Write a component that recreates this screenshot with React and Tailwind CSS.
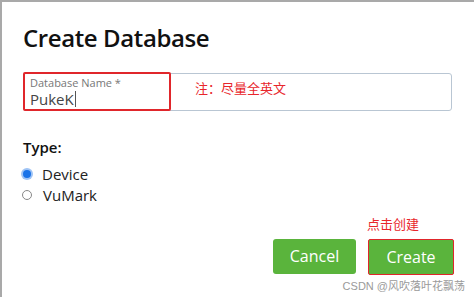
export default function App() {
  return (
    <div className="w-[474px] h-[297px] bg-white border-t-2 border-l-2 border-[#a9a9a9] relative overflow-hidden" style={{ fontFamily: "'Open Sans', 'Noto Sans CJK SC', sans-serif" }}>
      <div className="pl-[21px] pt-[19px] pr-[20px]">
        <h1 className="text-[24px] leading-[34px] font-semibold tracking-[-0.4px] text-[#111]">Create Database</h1>
        <div className="mt-[18px] relative h-[38px] w-[429px] rounded-[3px] border border-[#b9c6d3]">
          <div className="absolute -left-px -top-[2px] w-[148px] h-[39px] border-2 border-[#e0262b] rounded-[2px]" />
          <div className="pl-[6px] pt-[2px]">
            <div className="text-[11px] leading-[14px] text-[#777]">Database Name *</div>
            <div className="text-[15px] leading-[18px] text-[#444] flex items-center">
              PukeK<span className="w-px h-[16px] bg-[#555] ml-px" />
            </div>
          </div>
          <div className="absolute left-[171px] top-[5px] text-[13px] text-[#e8262b]">注：尽量全英文</div>
        </div>
        <div className="mt-[26px] text-[15px] leading-[20px] font-semibold text-[#111]">Type:</div>
        <div className="mt-[7px] flex flex-col gap-[1px] text-[15px] text-[#222]">
          <label className="flex items-center gap-[11px] h-[20px]">
            <span className="w-[8px] h-[8px] rounded-full bg-[#1a73e8] ring-[2px] ring-[#9ec3f5]" />
            Device
          </label>
          <label className="flex items-center gap-[11px] h-[20px]">
            <span className="w-[10px] h-[10px] rounded-full border border-[#888] -ml-px" />
            VuMark
          </label>
        </div>
        <div className="mt-[10px] flex justify-end pr-[1px]">
          <div className="text-[13px] text-[#e8262b] w-[86px]">点击创建</div>
        </div>
        <div className="mt-[4px] flex justify-end gap-[12px]">
          <button className="w-[83px] h-[35px] rounded-[3px] bg-[#5ab43c] text-white text-[16px]">Cancel</button>
          <button className="w-[86px] h-[36px] rounded-[2px] bg-[#5ab43c] text-white text-[16px] border border-[#e0262b]">Create</button>
        </div>
      </div>
      <div className="absolute right-[9px] bottom-[3px] text-[11px] text-[#9a9a9a]" style={{ fontFamily: "'Liberation Sans', 'Noto Sans CJK SC', sans-serif" }}>CSDN @风吹落叶花飘荡</div>
    </div>
  );
}
